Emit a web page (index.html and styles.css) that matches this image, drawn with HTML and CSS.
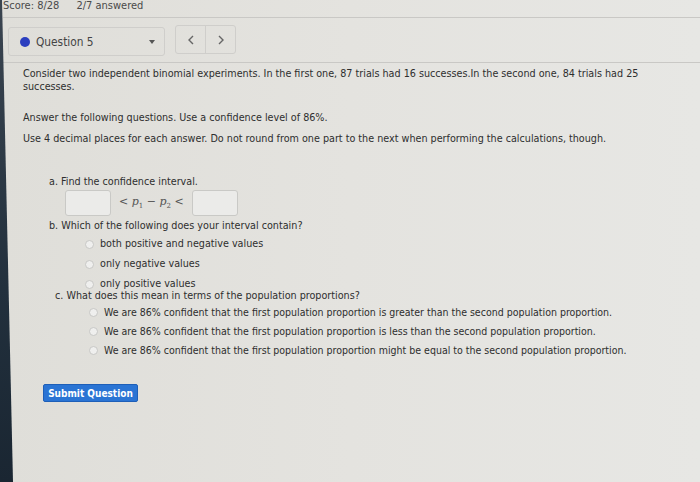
FILE: index.html
```html
<!DOCTYPE html>
<html>
<head>
<meta charset="utf-8">
<link rel="stylesheet" href="styles.css">
</head>
<body>
<div class="bezel"></div>
<div class="page">
  <div class="topbar">
    <span class="score">Score: 8/28</span>
    <span class="answered">2/7 answered</span>
  </div>
  <div class="qnav">
    <div class="qselect">
      <span class="dot"></span>
      <span class="qlabel">Question 5</span>
      <span class="caret"></span>
    </div>
    <div class="arrows">
      <span class="arrow"><svg width="8" height="10" viewBox="0 0 8 10"><polyline points="6,1 2,5 6,9" fill="none" stroke="#666" stroke-width="1.4"/></svg></span>
      <span class="arrow"><svg width="8" height="10" viewBox="0 0 8 10"><polyline points="2,1 6,5 2,9" fill="none" stroke="#666" stroke-width="1.4"/></svg></span>
    </div>
  </div>
  <div class="content">
    <p class="para para-first">Consider two independent binomial experiments. In the first one, 87 trials had 16 successes.In the second one, 84 trials had 25 successes.</p>
    <p class="para">Answer the following questions. Use a confidence level of 86%.</p>
    <p class="para">Use 4 decimal places for each answer. Do not round from one part to the next when performing the calculations, though.</p>

    <div class="parts">
      <div class="part">a. Find the confidence interval.</div>
      <div class="interval">
        <span class="box"></span>
        <span class="math">&lt; <i>p</i><sub>1</sub> &minus; <i>p</i><sub>2</sub> &lt;</span>
        <span class="box"></span>
      </div>
      <div class="part">b. Which of the following does your interval contain?</div>
      <div class="options">
        <label class="opt"><span class="radio"></span>both positive and negative values</label>
        <label class="opt"><span class="radio"></span>only negative values</label>
        <label class="opt"><span class="radio"></span>only positive values</label>
      </div>
      <div class="part part-c">c. What does this mean in terms of the population proportions?</div>
      <div class="options options-c">
        <label class="opt"><span class="radio"></span>We are 86% confident that the first population proportion is greater than the second population proportion.</label>
        <label class="opt"><span class="radio"></span>We are 86% confident that the first population proportion is less than the second population proportion.</label>
        <label class="opt"><span class="radio"></span>We are 86% confident that the first population proportion might be equal to the second population proportion.</label>
      </div>
    </div>
    <button class="submit">Submit Question</button>
  </div>
</div>
</body>
</html>
```

FILE: styles.css
```css
html, body {
  margin: 0;
  padding: 0;
  height: 100%;
}
body {
  background: linear-gradient(90deg, #dfded9 0%, #e4e3df 50%, #e7e7e4 100%);
  font-family: "DejaVu Sans Condensed", "DejaVu Sans", sans-serif;
  font-stretch: condensed;
  color: #2e2e2e;
  position: relative;
  overflow: hidden;
}
.bezel {
  position: absolute;
  left: 0;
  top: 0;
  width: 18px;
  height: 100%;
  background: linear-gradient(180deg, #3b4550 0%, #22303d 60%, #1a2632 100%);
  clip-path: polygon(0 0, 2px 0, 13px 100%, 0 100%);
}
.page {
  padding-left: 3px;
}
.topbar {
  display: flex;
  gap: 17px;
  font-size: 11px;
  line-height: 12px;
  color: #4a4a4a;
  padding-bottom: 5px;
  border-bottom: 1px solid #c9c8c5;
}
.qnav {
  display: flex;
  gap: 10px;
  padding: 7px 0 6px 5px;
  border-bottom: 1px solid #c9c8c5;
}
.qselect {
  width: 157px;
  height: 29px;
  border: 1px solid #cfcecb;
  border-radius: 3px;
  display: flex;
  align-items: center;
  box-sizing: border-box;
  padding-left: 11px;
  margin-top: 2px;
}
.dot {
  width: 10px;
  height: 10px;
  border-radius: 50%;
  background: #2b3fbf;
  margin-right: 6px;
}
.qlabel {
  font-size: 11.8px;
  color: #444;
  flex: 1;
}
.caret {
  width: 0;
  height: 0;
  border-left: 3px solid transparent;
  border-right: 3px solid transparent;
  border-top: 4px solid #555;
  margin-right: 9px;
}
.arrows {
  display: flex;
  border: 1px solid #cfcecb;
  border-radius: 3px;
  height: 29px;
  box-sizing: border-box;
}
.arrow {
  width: 29px;
  display: flex;
  align-items: center;
  justify-content: center;
}
.arrow + .arrow {
  border-left: 1px solid #cfcecb;
}
.content {
  padding-left: 20px;
  padding-top: 4px;
  font-size: 10.7px;
}
.para {
  margin: 0 0 8px 0;
  line-height: 13px;
  max-width: 625px;
}
.para-first {
  margin-bottom: 18px;
}
.parts {
  padding-left: 26px;
  margin-top: 30px;
}
.part {
  line-height: 14px;
}
.interval {
  display: flex;
  align-items: center;
  gap: 8px;
  padding-left: 16px;
  margin: 1px 0 3px;
}
.box {
  width: 46px;
  height: 26px;
  border: 1px solid #c9c9c6;
  border-radius: 3px;
  background: #ebebe9;
  box-sizing: border-box;
}
.math {
  font-family: "DejaVu Serif", "Liberation Serif", serif;
  font-stretch: normal;
  font-size: 11px;
  color: #555;
}
.math sub {
  font-size: 7px;
}
.options {
  display: flex;
  flex-direction: column;
  padding-left: 36px;
  gap: 6px;
  margin: 4px 0 -2px;
}
.opt {
  display: flex;
  align-items: center;
  line-height: 14px;
}
.radio {
  width: 7px;
  height: 7px;
  border: 1px solid #c8c8c6;
  border-radius: 50%;
  margin-right: 6px;
  background: #efefee;
}
.part-c {
  padding-left: 6px;
}
.options-c {
  padding-left: 40px;
  margin-top: 2px;
  gap: 5px;
  font-size: 10.5px;
}
.submit {
  display: block;
  margin-top: 29px;
  margin-left: 20px;
  background: #2a74d4;
  color: #fff;
  border: 1px solid #1e5fb8;
  border-radius: 2px;
  font-family: "DejaVu Sans Condensed", "DejaVu Sans", sans-serif;
  font-stretch: condensed;
  font-weight: bold;
  font-size: 10px;
  padding: 0 4px;
  height: 18px;
  width: 95px;
  white-space: nowrap;
}
```
